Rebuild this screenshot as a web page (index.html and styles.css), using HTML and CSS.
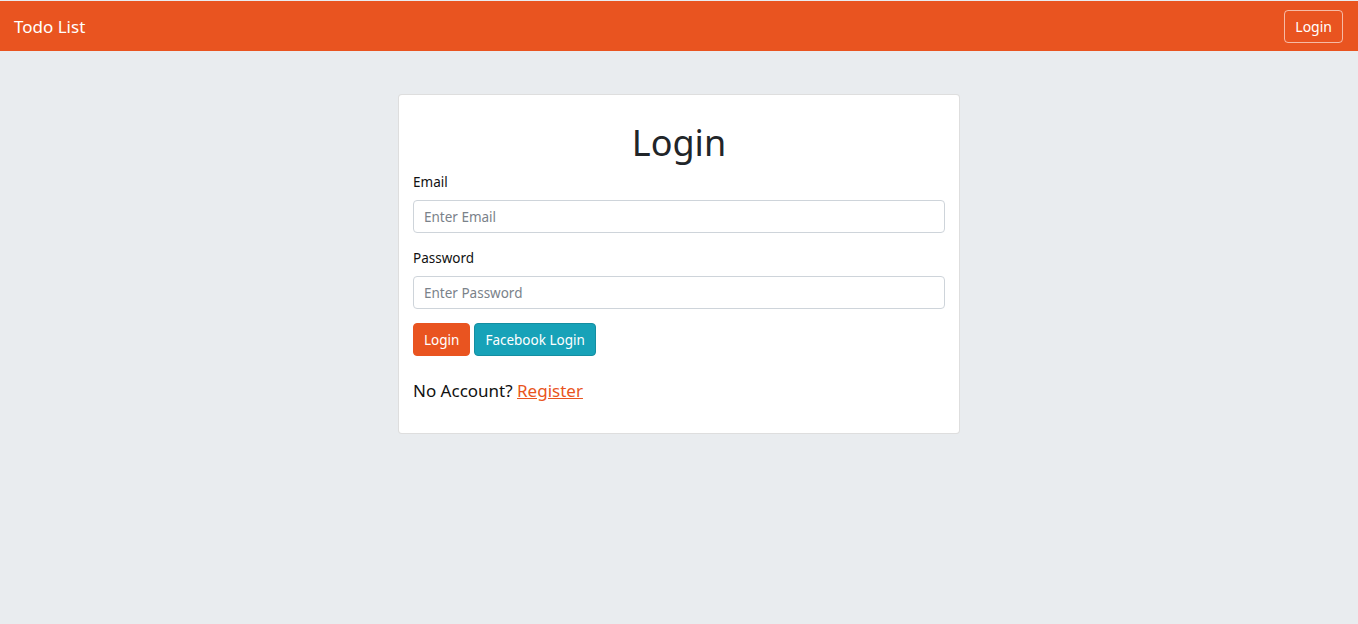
FILE: index.html
```html
<!DOCTYPE html>
<html lang="en">
<head>
<meta charset="utf-8">
<title>Todo List</title>
<link rel="stylesheet" href="styles.css">
</head>
<body>
<nav class="navbar">
  <a class="brand" href="#">Todo List</a>
  <button class="nav-btn" type="button">Login</button>
</nav>
<main class="main">
  <section class="card">
    <h1 class="title">Login</h1>
    <form class="form">
      <label class="label" for="email">Email</label>
      <input class="input" id="email" type="email" placeholder="Enter Email">
      <label class="label" for="password">Password</label>
      <input class="input" id="password" type="password" placeholder="Enter Password">
      <div class="actions">
        <button class="btn btn-primary" type="button">Login</button>
        <button class="btn btn-info" type="button">Facebook Login</button>
      </div>
    </form>
    <p class="footer-text">No Account? <a class="link" href="#">Register</a></p>
  </section>
</main>
</body>
</html>
```
FILE: styles.css
```css
* { box-sizing: border-box; }
html, body { margin: 0; padding: 0; }
body {
  font-family: "Noto Sans", "Open Sans", sans-serif;
  background: #e9ecef;
  color: #212529;
  min-height: 624px;
}
.navbar {
  margin-top: 1px;
  height: 50px;
  background: #e95420;
  display: flex;
  align-items: center;
  justify-content: space-between;
  padding: 0 15px 0 14px;
}
.brand {
  color: #fff;
  text-decoration: none;
  font-size: 17px;
}
.nav-btn {
  font-family: inherit;
  font-size: 14px;
  color: #fff;
  background: transparent;
  border: 1px solid rgba(255,255,255,0.6);
  border-radius: 4px;
  height: 33px;
  padding: 0 10px;
}
.main {
  display: flex;
  justify-content: center;
  padding-top: 43px;
}
.card {
  width: 562px;
  background: #fff;
  border: 1px solid rgba(0,0,0,0.13);
  border-radius: 4px;
  padding: 22px 14px 29px 14px;
}
.title {
  margin: 0 0 3px;
  font-weight: 400;
  font-size: 36px;
  line-height: 52px;
  text-align: center;
  color: #212529;
}
.form { display: flex; flex-direction: column; }
.label {
  font-size: 13.5px;
  color: #111;
  line-height: 20px;
  margin-bottom: 8px;
}
.input {
  height: 33px;
  border: 1px solid #ced4da;
  border-radius: 4px;
  padding: 0 10px;
  font-family: inherit;
  font-size: 13.5px;
  margin-bottom: 15px;
  color: #495057;
}
.input::placeholder { color: #7a828a; }
.actions { display: flex; gap: 4px; margin-top: -1px; }
.btn {
  font-family: inherit;
  font-size: 13.5px;
  color: #fff;
  height: 33px;
  padding: 0 10px;
  border-radius: 4px;
  border: 1px solid transparent;
}
.btn-primary { background: #e95420; border-color: #e95420; }
.btn-info { background: #17a2b8; border-color: #148ea1; }
.footer-text {
  margin: 22px 0 0;
  font-size: 17px;
  line-height: 26px;
  color: #111;
}
.link { color: #e95420; }
```
